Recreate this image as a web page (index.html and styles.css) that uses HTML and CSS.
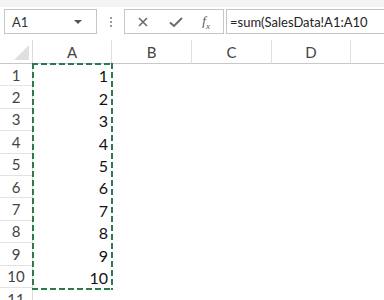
FILE: index.html
```html
<!DOCTYPE html>
<html lang="en">
<head>
<meta charset="UTF-8">
<meta name="viewport" content="width=device-width, initial-scale=1.0">
<title>Sheet</title>
<link rel="stylesheet" href="styles.css">
</head>
<body>
<div class="top-strip"></div>
<div class="formula-bar">
  <div class="name-box">
    <span>A1</span>
    <span class="caret"></span>
  </div>
  <div class="grip"><i></i><i></i><i></i></div>
  <div class="fx-buttons">
    <svg class="btn" width="14" height="14" viewBox="0 0 14 14"><path d="M3 3 L11 11 M11 3 L3 11" stroke="#6b6b6b" stroke-width="1.6" fill="none"/></svg>
    <svg class="btn" width="16" height="14" viewBox="0 0 16 14"><path d="M2 7.5 L6 11 L14 3" stroke="#6b6b6b" stroke-width="2" fill="none"/></svg>
    <span class="fx">f<sub>x</sub></span>
  </div>
  <div class="formula-input">=sum(SalesData!A1:A10</div>
</div>

<div class="sheet">
  <div class="corner"><span class="tri"></span></div>
  <div class="col-head">A</div>
  <div class="col-head">B</div>
  <div class="col-head">C</div>
  <div class="col-head">D</div>
  <div class="col-head last"></div>

  <div class="row-head">1</div><div class="cell">1</div><div class="rest"></div>
  <div class="row-head">2</div><div class="cell">2</div><div class="rest"></div>
  <div class="row-head">3</div><div class="cell">3</div><div class="rest"></div>
  <div class="row-head">4</div><div class="cell">4</div><div class="rest"></div>
  <div class="row-head">5</div><div class="cell">5</div><div class="rest"></div>
  <div class="row-head">6</div><div class="cell">6</div><div class="rest"></div>
  <div class="row-head">7</div><div class="cell">7</div><div class="rest"></div>
  <div class="row-head">8</div><div class="cell">8</div><div class="rest"></div>
  <div class="row-head">9</div><div class="cell">9</div><div class="rest"></div>
  <div class="row-head">10</div><div class="cell">10</div><div class="rest"></div>
  <div class="row-head">11</div><div class="cell"></div><div class="rest"></div>

  <div class="ants"></div>
</div>
</body>
</html>
```

FILE: styles.css
```css
body {
  margin: 0;
  padding: 0;
  background: #fff;
  font-family: Lato, "Open Sans", sans-serif;
  color: #222;
  overflow: hidden;
}

.top-strip {
  height: 7px;
  background: #f3f3f3;
}

.formula-bar {
  display: flex;
  align-items: stretch;
  height: 25px;
  margin-top: 2px;
  padding-left: 4px;
}

.name-box {
  border: 1px solid #c6c6c6;
  display: flex;
  align-items: center;
  justify-content: space-between;
  padding: 0 14px 0 7px;
  box-sizing: border-box;
  width: 93px;
  font-size: 13px;
  color: #333;
}

.caret {
  width: 0;
  height: 0;
  border-left: 4px solid transparent;
  border-right: 4px solid transparent;
  border-top: 4px solid #555;
}

.grip {
  width: 27px;
  display: flex;
  flex-direction: column;
  align-items: center;
  justify-content: center;
  gap: 2px;
}

.grip i {
  display: block;
  width: 2px;
  height: 2px;
  background: #9a9a9a;
}

.fx-buttons {
  width: 100px;
  box-sizing: border-box;
  border: 1px solid #c6c6c6;
  display: flex;
  align-items: center;
  justify-content: space-around;
  padding: 0 4px 0 2px;
}

.fx {
  font-family: "Liberation Serif", serif;
  font-style: italic;
  font-size: 13px;
  color: #555;
}

.fx sub {
  font-size: 9px;
}

.formula-input {
  flex: 1;
  margin-left: 2px;
  border: 1px solid #c6c6c6;
  border-right: none;
  display: flex;
  align-items: center;
  padding-left: 3px;
  font-size: 13px;
  color: #222;
}

.sheet {
  position: relative;
  margin-top: 6px;
  display: grid;
  grid-template-columns: 33px 79px 80px 80px 79px 1fr;
  grid-template-rows: 24px repeat(11, 22.4px);
}

.corner {
  position: relative;
  border-bottom: 1px solid #c8c8c8;
  border-right: 1px solid #dcdcdc;
}

.tri {
  position: absolute;
  right: 3px;
  bottom: 3px;
  width: 0;
  height: 0;
  border-left: 15px solid transparent;
  border-bottom: 15px solid #dfdfdf;
}

.col-head {
  border-bottom: 1px solid #c8c8c8;
  border-right: 1px solid #e0e0e0;
  display: flex;
  align-items: center;
  justify-content: center;
  font-size: 15px;
  color: #444;
}

.col-head.last {
  border-right: none;
}

.row-head {
  border-bottom: 1px solid #e3e3e3;
  border-right: 1px solid #dcdcdc;
  display: flex;
  align-items: center;
  justify-content: center;
  font-size: 15px;
  color: #444;
}

.cell {
  display: flex;
  align-items: flex-end;
  justify-content: flex-end;
  padding: 0 4px 1px 0;
  font-size: 16px;
  color: #111;
}

.rest {
  grid-column: span 4;
}

/* copy marquee around A1:A10 */
.ants {
  position: absolute;
  left: 32px;
  top: 23px;
  width: 81px;
  height: 227px;
  background:
    repeating-linear-gradient(90deg, #2a7a4e 0 6px, transparent 6px 9px) top / 100% 2px no-repeat,
    repeating-linear-gradient(90deg, #2a7a4e 0 6px, transparent 6px 9px) bottom / 100% 2px no-repeat,
    repeating-linear-gradient(180deg, #2a7a4e 0 6px, transparent 6px 9px) left / 2px 100% no-repeat,
    repeating-linear-gradient(180deg, #2a7a4e 0 6px, transparent 6px 9px) right / 2px 100% no-repeat;
}
```
